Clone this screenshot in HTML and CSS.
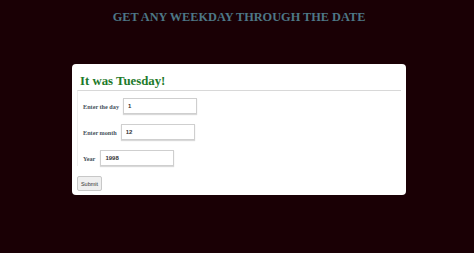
FILE: index.html
```html
<!DOCTYPE html>
<html>
<head>
<meta charset="utf-8">
<link rel="stylesheet" href="styles.css">
</head>
<body>
<h1 class="title">GET ANY WEEKDAY THROUGH THE DATE</h1>
<div class="card">
  <h2 class="result">It was Tuesday!</h2>
  <form class="form">
    <div class="row"><label class="lbl">Enter the day</label><input class="inp" type="text" value="1"></div>
    <div class="row"><label class="lbl">Enter month</label><input class="inp" type="text" value="12"></div>
    <div class="row"><label class="lbl">Year</label><input class="inp" type="text" value="1998"></div>
  </form>
  <button class="btn" type="button">Submit</button>
</div>
</body>
</html>
```
FILE: styles.css
```css
html, body { margin: 0; padding: 0; }
body {
  background: #1a0005;
  width: 474px;
  height: 253px;
  font-family: "Liberation Serif", serif;
  overflow: hidden;
}
.title {
  margin: 0;
  padding: 10px 0 0 4px;
  text-align: center;
  font-size: 12.3px;
  font-weight: bold;
  color: #4d7786;
  height: 64px;
  box-sizing: border-box;
}
.card {
  margin-left: 72px;
  width: 334px;
  height: 131px;
  box-sizing: border-box;
  background: #fff;
  border-radius: 4px;
  padding: 9px 5px 0 5px;
}
.result {
  margin: 0 0 0 3px;
  font-size: 12.8px;
  font-weight: bold;
  color: #1d7a2a;
  line-height: 17px;
}
.form {
  margin-top: 0;
  border-top: 1px solid #d8d8d8;
  border-left: 1px solid #eeeeee;
  padding: 7px 0 0 5px;
}
.row {
  display: flex;
  align-items: center;
  height: 16px;
  margin-bottom: 10px;
}
.lbl {
  font-size: 6.2px;
  font-weight: bold;
  color: #47535c;
  margin-right: 4px;
}
.row:last-child .lbl {
  margin-right: 5px;
}
.inp {
  width: 74px;
  height: 16px;
  box-sizing: border-box;
  border: 1px solid #cfcfcf;
  box-shadow: 0 1px 1px rgba(0,0,0,0.15);
  font-family: "Liberation Sans", sans-serif;
  font-size: 6px;
  font-weight: bold;
  color: #333;
  padding: 0 4px;
  outline: none;
  margin: 0;
}
.btn {
  display: block;
  margin: 0;
  width: 25px;
  height: 15px;
  padding: 0;
  font-family: "Liberation Sans", sans-serif;
  font-size: 5.5px;
  color: #333;
  background: #efefef;
  border: 1px solid #c8c8c8;
  border-radius: 2px;
}
```
